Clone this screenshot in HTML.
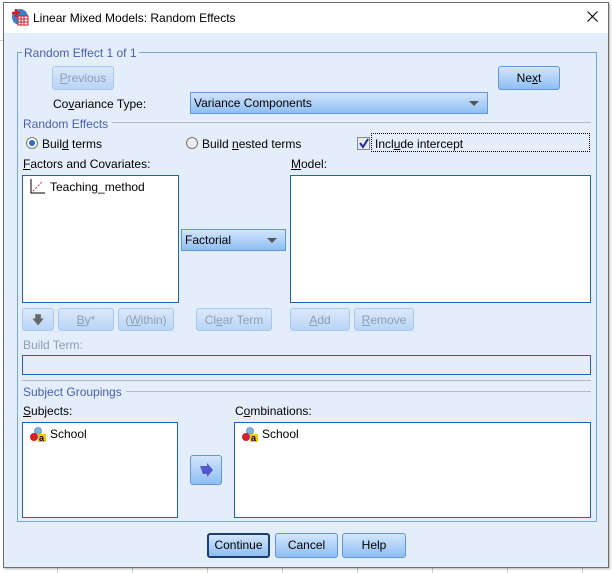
<!DOCTYPE html>
<html><head><meta charset="utf-8"><style>
*{box-sizing:border-box}
body{margin:0;width:612px;height:573px;position:relative;overflow:hidden;background:#fff;font-family:"Liberation Sans",Arial,sans-serif;font-size:12px;color:#000}
.a{position:absolute}
.dlg{left:3px;top:2px;width:606px;height:566px;background:#e3eefa;border:1px solid #6e6e6e;box-shadow:1px 1px 2px rgba(0,0,0,.3)}
.title{left:4px;top:3px;width:604px;height:30px;background:#fff}
.btn{position:absolute;border:1px solid #5f97d8;border-radius:3px;background:linear-gradient(#d3e5fb,#8ebef3);text-align:center;line-height:23px;font-size:12px}
.dis{border-color:#a9c8ee;background:linear-gradient(#dbe9fb,#b9d5f5);color:#8c9fb6}
.list{position:absolute;background:#fff;border:1px solid #1e64b4}
.lbl{position:absolute;font-size:12px;line-height:14px}
.grp{color:#4b5fae}
.line{position:absolute;height:1px;background:#b4b9c0}
.dd{position:absolute;border:1px solid #5f97d8;background:linear-gradient(#d3e5fb,#8ebef3);padding-left:3px;line-height:21px}
.tri{position:absolute;right:8px;top:8px;width:0;height:0;border-left:5px solid transparent;border-right:5px solid transparent;border-top:5px solid #555}
u{text-decoration:underline}
.grid{position:absolute;background:#c8d0dc}
</style></head><body>
<div class="grid" style="left:0;top:40px;width:3px;height:1px"></div>
<div class="grid" style="left:57px;top:568px;width:1px;height:5px"></div>
<div class="grid" style="left:132px;top:568px;width:1px;height:5px"></div>
<div class="grid" style="left:207px;top:568px;width:1px;height:5px"></div>
<div class="grid" style="left:282px;top:568px;width:1px;height:5px"></div>
<div class="grid" style="left:357px;top:568px;width:1px;height:5px"></div>
<div class="grid" style="left:432px;top:568px;width:1px;height:5px"></div>
<div class="grid" style="left:507px;top:568px;width:1px;height:5px"></div>
<div class="grid" style="left:582px;top:568px;width:1px;height:5px"></div>
<div class="a dlg"></div>
<div class="a title"></div>
<svg class="a" style="left:11px;top:8px" width="18" height="18" viewBox="0 0 18 18"><circle cx="9" cy="9" r="8" fill="#3a7fc8"/><rect x="7" y="8" width="10" height="9" fill="#fff" stroke="#c21d2a"/><path d="M7 11h10M7 14h10M10 8v9M13 8v9" stroke="#c21d2a"/><path d="M5 1v8M1 5h8" stroke="#d0202a" stroke-width="2.4"/></svg>
<div class="lbl" style="left:33px;top:11px;font-size:12px">Linear Mixed Models: Random Effects</div>
<svg class="a" style="left:587px;top:11px" width="11" height="11"><path d="M0.5 0.5L10.5 10.5M10.5 0.5L0.5 10.5" stroke="#000" stroke-width="1.1"/></svg>

<div class="a" style="left:17px;top:52px;width:580px;height:470px;border:1px solid #7aa6d6"></div>
<div class="lbl grp" style="left:22px;top:46px;background:#e3eefa;padding:0 2px">Random Effect 1 of 1</div>
<div class="btn dis" style="left:52px;top:66px;width:62px;height:24px"><u>P</u>revious</div>
<div class="btn" style="left:498px;top:66px;width:62px;height:24px">Ne<u>x</u>t</div>
<div class="lbl" style="left:53px;top:97px">Co<u>v</u>ariance Type:</div>
<div class="dd" style="left:190px;top:92px;width:298px;height:22px">Variance Components<div class="tri"></div></div>

<div class="line" style="left:112px;top:122px;width:479px"></div>
<div class="lbl grp" style="left:23px;top:117px">Random Effects</div>
<svg class="a" style="left:26px;top:137px" width="12" height="12"><circle cx="6" cy="6" r="5.5" fill="#fff" stroke="#777"/><circle cx="6" cy="6" r="3" fill="#2a6fc8"/></svg>
<div class="lbl" style="left:42px;top:137px">Buil<u>d</u> terms</div>
<svg class="a" style="left:186px;top:137px" width="12" height="12"><circle cx="6" cy="6" r="5.5" fill="#eee" stroke="#777"/></svg>
<div class="lbl" style="left:202px;top:137px">Build <u>n</u>ested terms</div>
<svg class="a" style="left:357px;top:137px" width="13" height="13"><rect x=".5" y=".5" width="12" height="12" fill="#e8ecf2" stroke="#888"/><path d="M3 6l3 4l5-8" stroke="#1a2a9a" stroke-width="2" fill="none"/></svg>
<div class="a" style="left:371px;top:133px;width:219px;height:19px;border:1px dotted #000"></div>
<div class="lbl" style="left:375px;top:137px">Incl<u>u</u>de intercept</div>

<div class="lbl" style="left:23px;top:157px"><u>F</u>actors and Covariates:</div>
<div class="list" style="left:22px;top:175px;width:157px;height:128px"></div>
<svg class="a" style="left:30px;top:178px" width="16" height="16"><path d="M1 1v14h14" stroke="#000" fill="none"/><path d="M3 13l10-10" stroke="#c33" stroke-dasharray="2 1.5"/></svg>
<div class="lbl" style="left:50px;top:180px">Teaching_method</div>
<div class="dd" style="left:181px;top:229px;width:105px;height:22px">Factorial<div class="tri"></div></div>
<div class="lbl" style="left:291px;top:157px"><u>M</u>odel:</div>
<div class="list" style="left:290px;top:175px;width:301px;height:128px"></div>

<div class="btn dis" style="left:22px;top:308px;width:32px;height:23px;color:#666">🡇</div>
<div class="btn dis" style="left:58px;top:308px;width:56px;height:23px"><u>B</u>y*</div>
<div class="btn dis" style="left:118px;top:308px;width:56px;height:23px">(<u>W</u>ithin)</div>
<div class="btn dis" style="left:196px;top:308px;width:76px;height:23px">Cl<u>e</u>ar Term</div>
<div class="btn dis" style="left:290px;top:308px;width:60px;height:23px"><u>A</u>dd</div>
<div class="btn dis" style="left:354px;top:308px;width:60px;height:23px"><u>R</u>emove</div>
<div class="lbl" style="left:23px;top:338px;color:#8c9fb6">Build Term:</div>
<div class="a" style="left:22px;top:355px;width:569px;height:20px;border:1px solid #1e64b4"></div>

<div class="line" style="left:22px;top:380px;width:569px"></div>
<div class="line" style="left:126px;top:391px;width:465px"></div>
<div class="lbl grp" style="left:23px;top:385px">Subject Groupings</div>
<div class="lbl" style="left:23px;top:404px"><u>S</u>ubjects:</div>
<div class="list" style="left:22px;top:422px;width:156px;height:96px"></div>
<svg class="a" style="left:29px;top:426px" width="18" height="16"><circle cx="9" cy="5" r="3.5" fill="#7fb0e0" stroke="#3a6fb0" stroke-width=".6"/><circle cx="5" cy="11" r="4" fill="#d8202a"/><rect x="9" y="8" width="8" height="8" fill="#f5c800"/><text x="10" y="15" font-size="9" font-weight="bold" font-family="Liberation Sans">a</text></svg>
<div class="lbl" style="left:50px;top:427px">School</div>
<div class="btn" style="left:190px;top:455px;width:32px;height:30px"></div>
<svg class="a" style="left:198px;top:462px" width="16" height="16"><path d="M2 4h7V1l6 7-6 7v-3H5z" fill="#5558c8"/></svg>
<div class="lbl" style="left:235px;top:404px">C<u>o</u>mbinations:</div>
<div class="list" style="left:234px;top:422px;width:357px;height:96px"></div>
<svg class="a" style="left:241px;top:426px" width="18" height="16"><circle cx="9" cy="5" r="3.5" fill="#7fb0e0" stroke="#3a6fb0" stroke-width=".6"/><circle cx="5" cy="11" r="4" fill="#d8202a"/><rect x="9" y="8" width="8" height="8" fill="#f5c800"/><text x="10" y="15" font-size="9" font-weight="bold" font-family="Liberation Sans">a</text></svg>
<div class="lbl" style="left:262px;top:427px">School</div>

<div class="btn" style="left:207px;top:533px;width:63px;height:25px;border:2px solid #1c3f6e;line-height:21px">Continue</div>
<div class="btn" style="left:275px;top:533px;width:63px;height:25px;line-height:23px">Cancel</div>
<div class="btn" style="left:342px;top:533px;width:64px;height:25px;line-height:23px">Help</div>
</body></html>
